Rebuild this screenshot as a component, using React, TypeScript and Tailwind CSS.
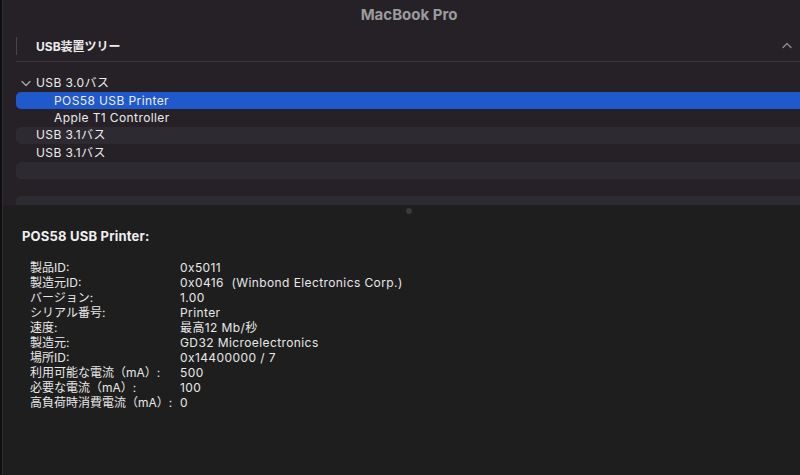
import React from "react";

const rows: { label: string; indent: number; selected?: boolean; chevron?: boolean }[] = [
  { label: "USB 3.0バス", indent: 36, chevron: true },
  { label: "POS58 USB Printer", indent: 54, selected: true },
  { label: "Apple T1 Controller", indent: 54 },
  { label: "USB 3.1バス", indent: 36 },
  { label: "USB 3.1バス", indent: 36 },
  { label: "", indent: 36 },
  { label: "", indent: 36 },
  { label: "", indent: 36 },
];

const details: [string, string][] = [
  ["製品ID:", "0x5011"],
  ["製造元ID:", "0x0416  (Winbond Electronics Corp.)"],
  ["バージョン:", "1.00"],
  ["シリアル番号:", "Printer"],
  ["速度:", "最高12 Mb/秒"],
  ["製造元:", "GD32 Microelectronics"],
  ["場所ID:", "0x14400000 / 7"],
  ["利用可能な電流（mA）:", "500"],
  ["必要な電流（mA）:", "100"],
  ["高負荷時消費電流（mA）:", "0"],
];

export default function App() {
  return (
    <div
      className="w-[800px] h-[475px] flex overflow-hidden bg-[#1e1e1e] text-[#e6e6e6]"
      style={{ fontFamily: 'Inter, "Noto Sans CJK JP", sans-serif' }}
    >
      <div className="w-[3px] shrink-0 bg-[#0f0f10] border-r border-[#2e2e30]" />
      <div className="flex-1 flex flex-col">
        <div className="h-[205px] shrink-0 bg-[#252127] flex flex-col overflow-hidden">
          <div className="h-[28px] shrink-0 pl-[15px] flex items-center justify-center">
            <span className="text-[15px] font-bold text-[#9b9b9c] leading-none">MacBook Pro</span>
          </div>
          <div className="ml-[13px] h-[34px] shrink-0 flex items-center border-b border-[#3b383d] relative">
            <div className="w-px h-[18px] mt-[2px] bg-[#47444a]" />
            <span className="ml-[19px] mt-[4px] text-[12px] font-bold text-[#ececec]">USB装置ツリー</span>
            <svg
              className="absolute right-[8px] top-[14px]"
              width="10"
              height="7"
              viewBox="0 0 10 7"
              fill="none"
            >
              <path d="M1 5.5 L5 1.5 L9 5.5" stroke="#8d8a8f" strokeWidth="1.4" strokeLinecap="round" strokeLinejoin="round" />
            </svg>
          </div>
          <div className="mt-[12.6px] shrink-0 flex flex-col">
            {rows.map((r, i) => {
              const bg = r.selected
                ? "bg-[#1f59cc]"
                : i % 2 === 1
                ? "bg-[#2e2a31]"
                : "bg-transparent";
              return (
                <div
                  key={i}
                  className={`ml-[13px] h-[17.4px] shrink-0 rounded-l-[5px] flex items-center relative ${bg}`}
                >
                  {r.chevron && (
                    <svg
                      className="absolute left-[5px] top-[5px]"
                      width="10"
                      height="7"
                      viewBox="0 0 10 7"
                      fill="none"
                    >
                      <path d="M1 1.5 L5 5.5 L9 1.5" stroke="#a9a6ab" strokeWidth="1.3" strokeLinecap="round" strokeLinejoin="round" />
                    </svg>
                  )}
                  <span
                    className="text-[12px] leading-none tracking-[0.4px] text-[#ececec]"
                    style={{ paddingLeft: r.indent - 16 }}
                  >
                    {r.label}
                  </span>
                </div>
              );
            })}
          </div>
        </div>
        <div className="flex-1 bg-[#1e1e1e] relative">
          <div className="absolute left-[403px] top-[3px] w-[6px] h-[6px] rounded-full bg-[#3a393b]" />
          <div className="pl-[19px] pt-[24px]">
            <div className="h-[16px] flex items-center text-[13px] font-bold tracking-[0.2px] text-[#f0f0f0]">
              POS58 USB Printer:
            </div>
            <div className="mt-[15.5px] pl-[8px] flex flex-col">
              {details.map(([k, v], i) => (
                <div key={i} className="h-[15px] flex items-center text-[12px] text-[#e8e8e8]">
                  <span className="w-[150px] shrink-0 whitespace-nowrap">{k}</span>
                  <span className="whitespace-pre tracking-[0.4px]">{v}</span>
                </div>
              ))}
            </div>
          </div>
        </div>
      </div>
    </div>
  );
}
